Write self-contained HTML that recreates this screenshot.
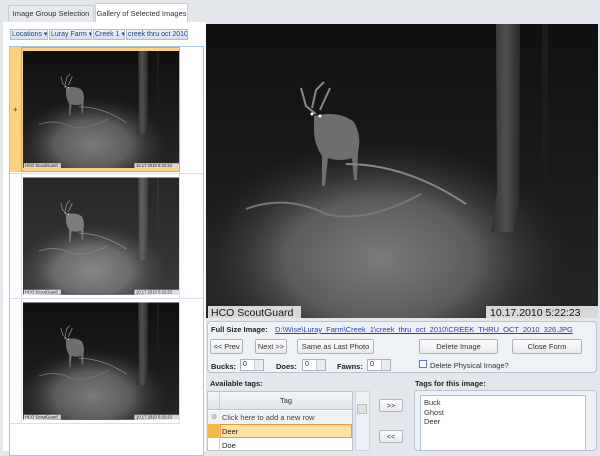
<!DOCTYPE html>
<html><head><meta charset="utf-8"><style>
*{box-sizing:border-box;margin:0;padding:0}
body{width:600px;height:451px;overflow:hidden;background:#e3e7ec;font-family:"Liberation Sans",sans-serif;font-size:8px;color:#222;position:relative}
.a{position:absolute;white-space:nowrap}
.tab{position:absolute;font-size:7.5px;text-align:center;line-height:16px;border:1px solid #c5ccd6;border-bottom:none;border-radius:2px 2px 0 0;white-space:nowrap}
.btn{position:absolute;background:linear-gradient(#fdfdfd,#e8eaed);border:1px solid #aeb4bc;border-radius:2px;font-size:7.5px;text-align:center;line-height:13px;color:#333;white-space:nowrap}
.crumb{position:absolute;top:29px;height:11px;background:linear-gradient(#eef3fa,#d5e1f0);border:1px solid #a9bdd6;color:#1d3f7a;font-size:7px;line-height:9px;padding:0 1px;white-space:nowrap;overflow:hidden}
.spin{position:absolute;width:24px;height:12px;background:#fff;border:1px solid #aab2bd;font-size:7px;line-height:10px;padding-left:2px}
.spin:after{content:"";position:absolute;right:0;top:0;width:8px;height:10px;background:#e8ebef;border-left:1px solid #c5ccd4}
b{font-weight:bold}
</style></head><body>
<svg width="0" height="0" style="position:absolute"><defs>
<radialGradient id="g1" cx="0.5" cy="0.5" r="0.5"><stop offset="0" stop-color="#7a7a7a"/><stop offset="0.5" stop-color="#5c5c5c"/><stop offset="1" stop-color="#2a2a2a" stop-opacity="0"/></radialGradient>
<linearGradient id="g2" x1="0" y1="0" x2="0" y2="1"><stop offset="0" stop-color="#101010"/><stop offset="0.5" stop-color="#1a1a1a"/><stop offset="1" stop-color="#262626"/></linearGradient>
<linearGradient id="tr" x1="0" x2="1"><stop offset="0" stop-color="#2e2e2e"/><stop offset="0.5" stop-color="#505050"/><stop offset="1" stop-color="#2a2a2a"/></linearGradient>
<symbol id="scene" viewBox="0 0 392 294">
<rect width="392" height="294" fill="url(#g2)"/>
<ellipse cx="175" cy="235" rx="190" ry="120" fill="url(#g1)"/>
<path d="M290 0h24l-1 180 -6 28h-22l6-40z" fill="url(#tr)"/>
<path d="M336 0h6v170h-6z" fill="#1c1c1c"/>
<path d="M108 92 q25 -6 40 6 q8 15 4 30 l-1 28 h-3 l-2-22 q-12 4 -24 0 l-3 28h-3l0-30 q-8-12-8-26 z" fill="#6e6e6e"/>
<path d="M110 90 l-10-8 l-5-18 M106 84 l4-18 l8-8 M114 86 l10-22" stroke="#888" stroke-width="2" fill="none"/>
<circle cx="106" cy="90" r="1.5" fill="#fff"/><circle cx="114" cy="92" r="1.5" fill="#fff"/>
<path d="M40 185 q40-15 80 5 q40 10 95 -20" stroke="#777" stroke-width="2" fill="none"/>
<path d="M140 140 q60 0 120 40" stroke="#888" stroke-width="2" fill="none"/>
<rect x="2" y="282" width="93" height="12" fill="#d8d8d8"/>
<text x="5" y="292" font-family="Liberation Sans" font-size="10.5" fill="#111">HCO ScoutGuard</text>
<rect x="280" y="282" width="112" height="12" fill="#d8d8d8"/>
<text x="284" y="292" font-family="Liberation Sans" font-size="10.5" fill="#111">10.17.2010   5:22:23</text>
</symbol></defs></svg>

<div class="tab" style="left:8px;top:5px;width:86px;height:18px;background:#e6e9ee;color:#333">Image Group Selection</div>
<div class="tab" style="left:95px;top:3px;width:93px;height:20px;background:#fff;color:#333;line-height:20px">Gallery of Selected Images</div>
<div class="a" style="left:3px;top:22px;width:203px;height:429px;background:#fff"></div>
<div class="crumb" style="left:10px;width:38px">Locations ▾</div>
<div class="crumb" style="left:49px;width:43px">Luray Farm ▾</div>
<div class="crumb" style="left:93px;width:32px">Creek 1 ▾</div>
<div class="crumb" style="left:126px;width:62px">creek thru oct 2010</div>

<div class="a" style="left:9px;top:46px;width:195px;height:410px;border:1px solid #aac3e4;background:#fff"></div>
<div class="a" style="left:10px;top:47px;width:12px;height:125px;background:#fdd27e"></div>
<div class="a" style="left:13px;top:105px;font-size:8px;color:#1d3f7a">+</div>
<div class="a" style="left:21px;top:47px;width:159px;height:125px;background:#fdd27e;border:1px solid #f5a04a"></div>
<svg class="a" style="left:23px;top:51px" width="156" height="117"><use href="#scene"/></svg>
<div class="a" style="left:10px;top:173px;width:193px;height:1px;background:#d4e1f2"></div>
<svg class="a" style="left:23px;top:177px;opacity:.9" width="156" height="118"><use href="#scene"/></svg>
<div class="a" style="left:10px;top:298px;width:193px;height:1px;background:#d4e1f2"></div>
<svg class="a" style="left:23px;top:302px" width="156" height="118"><use href="#scene"/></svg>
<div class="a" style="left:10px;top:423px;width:170px;height:1px;background:#d4e1f2"></div>
<div class="a" style="left:21px;top:173px;width:1px;height:251px;background:#d4e1f2"></div>
<div class="a" style="left:179px;top:173px;width:1px;height:251px;background:#d4e1f2"></div>

<svg class="a" style="left:206px;top:24px" width="392" height="294"><use href="#scene"/></svg>

<div class="a" style="left:207px;top:321px;width:390px;height:52px;background:#eef1f6;border:1px solid #b8c4d4;border-radius:4px"></div>
<div class="a" style="left:211px;top:325px;font-size:7.5px"><b>Full Size Image:</b></div>
<div class="a" style="left:275px;top:325px;font-size:7.5px;color:#2a3fb0;text-decoration:underline;word-spacing:2px">D:\Wise\Luray Farm\Creek 1\creek thru oct 2010\CREEK THRU OCT 2010 326.JPG</div>
<div class="btn" style="left:210px;top:339px;width:33px;height:15px">&lt;&lt; Prev</div>
<div class="btn" style="left:255px;top:339px;width:32px;height:15px">Next &gt;&gt;</div>
<div class="btn" style="left:297px;top:339px;width:77px;height:15px">Same as Last Photo</div>
<div class="btn" style="left:419px;top:339px;width:79px;height:15px">Delete Image</div>
<div class="btn" style="left:512px;top:339px;width:70px;height:15px">Close Form</div>
<div class="a" style="left:211px;top:362px;font-size:7.5px"><b>Bucks:</b></div>
<div class="spin" style="left:240px;top:359px"><span>0</span></div>
<div class="a" style="left:276px;top:362px;font-size:7.5px"><b>Does:</b></div>
<div class="spin" style="left:302px;top:359px">0</div>
<div class="a" style="left:337px;top:362px;font-size:7.5px"><b>Fawns:</b></div>
<div class="spin" style="left:367px;top:359px">0</div>
<div class="a" style="left:419px;top:360px;width:8px;height:8px;border:1px solid #5a7fb5;background:#fff"></div>
<div class="a" style="left:430px;top:361px;font-size:7.5px;color:#333">Delete Physical Image?</div>

<div class="a" style="left:210px;top:379px;font-size:7.5px"><b>Available tags:</b></div>
<div class="a" style="left:415px;top:379px;font-size:7.5px"><b>Tags for this image:</b></div>
<div class="a" style="left:207px;top:391px;width:146px;height:60px;background:#fff;border:1px solid #b8c4d4"></div>
<div class="a" style="left:208px;top:392px;width:144px;height:18px;background:linear-gradient(#f4f6f9,#e0e5ec);border-bottom:1px solid #b8c4d4"></div>
<div class="a" style="left:219px;top:392px;width:1px;height:59px;background:#c8d0da"></div>
<div class="a" style="left:280px;top:396px;font-size:7.5px;color:#333">Tag</div>
<div class="a" style="left:208px;top:411px;width:144px;height:13px;background:#eef2f8"></div>
<div class="a" style="left:211px;top:413px;font-size:7px;color:#888">⚙</div>
<div class="a" style="left:222px;top:413px;font-size:7.5px;color:#444">Click here to add a new row</div>
<div class="a" style="left:208px;top:424px;width:11px;height:14px;background:#f5b74a"></div>
<div class="a" style="left:220px;top:424px;width:132px;height:14px;background:#fde2a5;border:1px solid #f29a3a"></div>
<div class="a" style="left:222px;top:427px;font-size:7.5px">Deer</div>
<div class="a" style="left:222px;top:441px;font-size:7.5px">Doe</div>
<div class="a" style="left:355px;top:391px;width:15px;height:60px;background:#eceff3;border:1px solid #d0d6de"></div>
<div class="a" style="left:357px;top:404px;width:10px;height:10px;background:#dde2e8;border:1px solid #bbb"></div>
<div class="btn" style="left:379px;top:399px;width:24px;height:13px;font-size:7px">&gt;&gt;</div>
<div class="btn" style="left:379px;top:430px;width:24px;height:13px;font-size:7px">&lt;&lt;</div>
<div class="a" style="left:414px;top:390px;width:183px;height:61px;background:#eef1f6;border:1px solid #b8c4d4;border-radius:4px"></div>
<div class="a" style="left:420px;top:395px;width:166px;height:56px;background:#fff;border:1px solid #a9bfdc;padding:2px 3px;font-size:7.5px;line-height:9.7px;color:#333">Buck<br>Ghost<br>Deer</div>
</body></html>
